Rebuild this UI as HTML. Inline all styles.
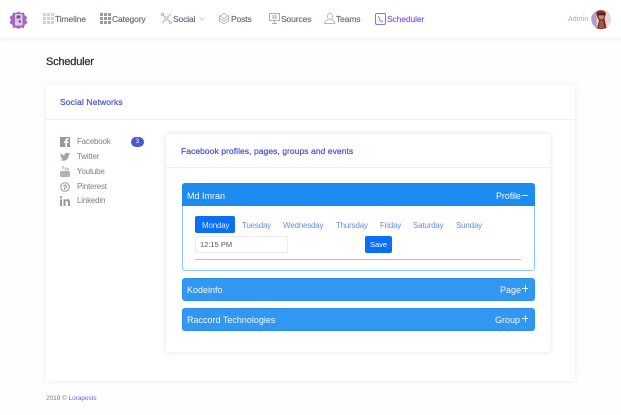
<!DOCTYPE html>
<html><head><meta charset="utf-8"><style>
html,body{margin:0;padding:0}
body{width:621px;height:415px;position:relative;overflow:hidden;background:#fefefe;font-family:"Liberation Sans",sans-serif}
.a,.t{position:absolute}
.t{white-space:nowrap;line-height:12px}
.n{font-size:8.5px;color:#6f7080;top:13px;letter-spacing:-.12px;-webkit-text-stroke:.2px #6f7080}
.s{font-size:8px;color:#7c7e8c;left:77px;letter-spacing:-.2px}
.d{font-size:8px;color:#5f8ff2;top:220px;letter-spacing:-.2px}
.h{font-size:9px;color:#f2f8ff;letter-spacing:0}
svg{position:absolute;overflow:visible}
</style></head><body>
<div class="a" style="left:0;top:0;width:621px;height:38px;background:#fff;box-shadow:0 1px 4px rgba(0,0,0,.07)"></div>

<svg style="left:9px;top:10px" width="19" height="20" viewBox="0 0 19 20"><path d="M9.500 1.500 12 3 15 2.500 15.500 5 18 7 17 10 18.500 13 15.500 15 15 18 12 17.500 9.500 19 7 17.500 4 18 3.500 15 .5 13 2 10 .5 7 3.500 5 4 2.500 7 3Z" fill="#a765c9"/><rect x="6" y="4" width="7.500" height="11.500" rx="1" fill="#ded0ea"/><rect x="7.500" y="5.500" width="4" height="3" fill="#7b4aa8"/><rect x="6" y="9.500" width="2.500" height="2.500" fill="#e5c187"/><rect x="9.500" y="10" width="2.500" height="3" fill="#9a68bd"/></svg>

<svg style="left:43px;top:13px" width="11" height="11" fill="#cfd1da"><path d="M0 0h3v3H0zM4 0h3v3H4zM8 0h3v3H8zM0 4h3v3H0zM4 4h3v3H4zM8 4h3v3H8zM0 8h3v3H0zM4 8h3v3H4zM8 8h3v3H8z"/></svg>
<div class="t n" style="left:55px">Timeline</div>
<svg style="left:100px;top:13px" width="11" height="11" fill="#9598a9"><path d="M0 0h3v3H0zM4 0h3v3H4zM8 0h3v3H8zM0 4h3v3H0zM4 4h3v3H4zM8 4h3v3H8zM0 8h3v3H0zM4 8h3v3H4zM8 8h3v3H8z"/></svg>
<div class="t n" style="left:112px">Category</div>
<svg style="left:161px;top:13px" width="11" height="11" fill="none" stroke="#b5b7c3" stroke-width="1"><path d="M1 1 10 10M10 1 1 10"/><circle cx="1.500" cy="1.500" r="1.200" fill="#fff"/><circle cx="9.500" cy="9.500" r="1.200" fill="#fff"/><circle cx="5.500" cy="5.500" r="1.500" fill="#fff"/></svg>
<div class="t n" style="left:173px">Social</div>
<svg style="left:199px;top:17px" width="6" height="4" fill="none" stroke="#c0c2cd" stroke-width=".8"><path d="M.5.500 3 3 5.500.500"/></svg>
<svg style="left:219px;top:13px" width="10" height="11" fill="none" stroke="#b5b8c4" stroke-width=".9"><path d="M5 .5 9.500 3v5.500L5 10.500.5 8.500V3ZM.5 3 5 5.500 9.500 3M.5 5.500 5 8 9.500 5.500"/></svg>
<div class="t n" style="left:231px">Posts</div>
<svg style="left:269px;top:13px" width="11" height="11" fill="none" stroke="#a9acb9" stroke-width="1"><path d="M.5.500h10v7H.5ZM3 10.500h5M5.500 7.500v3"/><rect x="3" y="2" width="5" height="4" fill="#cdcfd9" stroke="none"/></svg>
<div class="t n" style="left:281px">Sources</div>
<svg style="left:324px;top:13px" width="11" height="11" fill="none" stroke="#b5b8c4" stroke-width=".9"><path d="M3.500 3a2.500 2.500 0 0 1 5 0c0 2-1 3.500-2.500 3.500S3.500 5 3.500 3ZM.5 10.500c0-2.500 2-3 3.500-4M11 10.500c0-2.500-2-3-3.500-4M.5 10.500H11"/></svg>
<div class="t n" style="left:336px">Teams</div>
<svg style="left:375px;top:13px" width="11" height="12" fill="none" stroke="#9470f2" stroke-width="1"><rect x=".5" y=".5" width="10" height="11" rx="1.500"/><path d="M3.500 3 5 7.500 8 9"/></svg>
<div class="t n" style="left:387px;color:#8a5cf0;-webkit-text-stroke:.2px #8a5cf0">Scheduler</div>

<div class="t" style="left:568px;top:14px;font-size:7px;color:#a5a8bd;letter-spacing:.1px">Admin</div>
<svg style="left:591px;top:9px" width="20" height="20" viewBox="0 0 20 20"><circle cx="10" cy="10" r="10" fill="#ead9d2"/><path d="M.5 7 5 2.500 6 19.500 C3 18 .5 14 .5 10Z" fill="#b59ad0"/><path d="M5 4C6 .5 14 .5 15 4.500L13.500 9.500 15.500 19C12 20.500 8.500 20.500 6 19.500L8 11.500 6.500 9Z" fill="#7d2e2e"/><circle cx="10.300" cy="7.500" r="2.800" fill="#c98a70"/><path d="M6.500 4.500h7.500v1.800H6.500Z" fill="#4a1f22"/><path d="M9 11.500h3l1.500 8h-6Z" fill="#9c5a48"/></svg>

<div class="t" style="left:46px;top:56px;font-size:11px;color:#333;letter-spacing:-.2px;-webkit-text-stroke:.3px #333">Scheduler</div>

<div class="a" style="left:46px;top:85px;width:529px;height:296px;background:#fff;box-shadow:0 0 6px rgba(0,0,0,.09)"></div>
<div class="a" style="left:46px;top:119px;width:529px;height:1px;background:#f0f0f3"></div>
<div class="t" style="left:60px;top:96px;font-size:8.500px;color:#5058d6;letter-spacing:.12px;-webkit-text-stroke:.25px #5058d6">Social Networks</div>

<svg style="left:60px;top:137px" width="10" height="10"><rect width="10" height="10" fill="#9598a5"/><path d="M7 10V6h1.500l.2-1.600H7V3.500c0-.5.200-.7.700-.7h1V1.300H7.300C6 1.300 5.300 2 5.300 3.300v1.100H4V6h1.300v4Z" fill="#fff"/></svg>
<div class="t s" style="top:136px">Facebook</div>
<div class="a" style="left:131px;top:137px;width:13px;height:10px;border-radius:5px;background:#4a55d0;color:#fff;font-size:6px;line-height:10px;text-align:center">3</div>
<svg style="left:60px;top:152px" width="10" height="9" viewBox="0 0 10 9"><path d="M0 1c1 1.300 2.500 2 4.500 2.200C4.300 1.500 6.500 0 8 1.200L9.700.600 9 1.900 10 1.700 9 2.800C9 6 6.500 9 3.300 8.800 2 8.800 1 8.400 0 7.800c1.200.1 2.200-.2 3-.9C2 6.800 1.300 6.300 1 5.400h.9C.9 5 .3 4.200.3 3.200L1.200 3.500C.2 2.700 0 1.900.5 1Z" fill="#a0a3b0"/></svg>
<div class="t s" style="top:151px">Twitter</div>
<svg style="left:60px;top:166px" width="10" height="11"><rect x="0" y="5" width="10" height="6" rx="1.500" fill="#b0b3bd"/><path d="M2 0 3 2.500V4M4 0 3 2.500M5 2h1.200v2H5ZM7.500 2v2h1V2" fill="none" stroke="#b0b3bd" stroke-width=".7"/></svg>
<div class="t s" style="top:166px">Youtube</div>
<svg style="left:60px;top:182px" width="10" height="10"><circle cx="5" cy="5" r="4.300" fill="none" stroke="#a0a3b0" stroke-width="1.200"/><path d="M4.300 8 5.200 3.500M3.500 4.500C3.500 2.500 6.800 2.500 6.800 4.500 6.800 6.200 5 6.500 4.700 5.700" fill="none" stroke="#a0a3b0" stroke-width=".9"/></svg>
<div class="t s" style="top:181px">Pinterest</div>
<svg style="left:60px;top:196px" width="10" height="10" fill="#9598a5"><path d="M0 3.300h2V10H0ZM0 .3h2v2H0ZM3.500 3.300h1.900v1C5.800 3.600 6.500 3.100 7.500 3.100 9.300 3.100 10 4.300 10 6v4H8V6.400C8 5.400 7.600 4.900 6.800 4.900S5.500 5.500 5.500 6.400V10h-2Z"/></svg>
<div class="t s" style="top:195px">Linkedin</div>

<div class="a" style="left:166px;top:134px;width:384px;height:218px;background:#fff;box-shadow:0 0 6px rgba(0,0,0,.11)"></div>
<div class="a" style="left:166px;top:167px;width:384px;height:1px;background:#eeeef2"></div>
<div class="t" style="left:181px;top:145px;font-size:8.500px;color:#4f57d4;letter-spacing:.06px;-webkit-text-stroke:.25px #4f57d4">Facebook profiles, pages, groups and events</div>

<div class="a" style="left:182px;top:183px;width:351px;height:86px;border:1px solid #8cc6fb;border-radius:3px;background:#fff"></div>
<div class="a" style="left:182px;top:183px;width:353px;height:23px;background:#1d8cf0;border-radius:3px 3px 0 0"></div>
<div class="t h" style="left:187px;top:190px">Md Imran</div>
<div class="t h" style="left:496px;top:190px;letter-spacing:-.1px">Profile</div>
<div class="a" style="left:522px;top:195px;width:6px;height:1px;background:#e4f1ff"></div>

<div class="a" style="left:195px;top:216px;width:40px;height:17px;background:#0a6ff5;border-radius:2px"></div>
<div class="t d" style="left:202px;color:#dbe9ff">Monday</div>
<div class="t d" style="left:242px">Tuesday</div>
<div class="t d" style="left:283px">Wednesday</div>
<div class="t d" style="left:336px">Thursday</div>
<div class="t d" style="left:380px">Friday</div>
<div class="t d" style="left:413px">Saturday</div>
<div class="t d" style="left:456px">Sunday</div>

<div class="a" style="left:195px;top:236px;width:91px;height:15px;border:1px solid #ececf0;border-radius:2px;background:#fff"></div>
<div class="t" style="left:200px;top:239px;font-size:7.500px;color:#555">12:15 PM</div>
<div class="a" style="left:365px;top:236px;width:27px;height:17px;background:#0a6ff5;border-radius:2px;color:#fff;font-size:7.500px;line-height:17px;text-align:center">Save</div>
<div class="a" style="left:195px;top:259px;width:326px;height:1px;background:#cdb79e"></div>

<div class="a" style="left:182px;top:278px;width:351px;height:21px;background:#3297f1;border:1px solid #2a8fee;border-radius:3px"></div>
<div class="t h" style="left:187px;top:284px">Kodeinfo</div>
<div class="t h" style="left:500px;top:284px">Page</div>
<div class="a" style="left:522px;top:288px;width:6px;height:1px;background:#e4f1ff"></div><div class="a" style="left:525px;top:285px;width:1px;height:7px;background:#e4f1ff"></div>
<div class="a" style="left:182px;top:308px;width:351px;height:21px;background:#3297f1;border:1px solid #2a8fee;border-radius:3px"></div>
<div class="t h" style="left:187px;top:314px">Raccord Technologies</div>
<div class="t h" style="left:495px;top:314px">Group</div>
<div class="a" style="left:522px;top:318px;width:6px;height:1px;background:#e4f1ff"></div><div class="a" style="left:525px;top:315px;width:1px;height:7px;background:#e4f1ff"></div>

<div class="t" style="left:46px;top:393px;font-size:6.500px;color:#777a88;letter-spacing:-.05px">2019 © <span style="color:#6f5ce0">Loraposts</span></div>
</body></html>
